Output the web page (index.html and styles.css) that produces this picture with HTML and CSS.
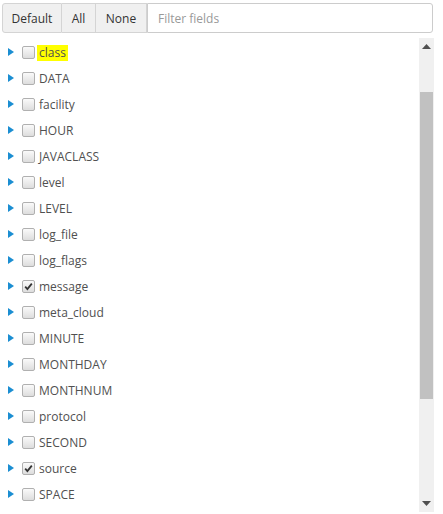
FILE: index.html
```html
<!DOCTYPE html>
<html>
<head>
<meta charset="utf-8">
<link rel="stylesheet" href="styles.css">
</head>
<body>
<div class="panel">
  <div class="toolbar">
    <button class="btn btn-first">Default</button>
    <button class="btn">All</button>
    <button class="btn">None</button>
    <input class="filter" type="text" placeholder="Filter fields">
  </div>
  <div class="body">
    <ul class="fields">
      <li class="field"><span class="caret"></span><span class="cb"></span><span class="name hl">class</span></li>
      <li class="field"><span class="caret"></span><span class="cb"></span><span class="name">DATA</span></li>
      <li class="field"><span class="caret"></span><span class="cb"></span><span class="name">facility</span></li>
      <li class="field"><span class="caret"></span><span class="cb"></span><span class="name">HOUR</span></li>
      <li class="field"><span class="caret"></span><span class="cb"></span><span class="name">JAVACLASS</span></li>
      <li class="field"><span class="caret"></span><span class="cb"></span><span class="name">level</span></li>
      <li class="field"><span class="caret"></span><span class="cb"></span><span class="name">LEVEL</span></li>
      <li class="field"><span class="caret"></span><span class="cb"></span><span class="name">log_file</span></li>
      <li class="field"><span class="caret"></span><span class="cb"></span><span class="name">log_flags</span></li>
      <li class="field"><span class="caret"></span><span class="cb checked"><svg viewBox="0 0 13 13" width="13" height="13"><path d="M3.2 6.6 L5.4 9 L9.8 3.6" fill="none" stroke="#333" stroke-width="1.8"/></svg></span><span class="name">message</span></li>
      <li class="field"><span class="caret"></span><span class="cb"></span><span class="name">meta_cloud</span></li>
      <li class="field"><span class="caret"></span><span class="cb"></span><span class="name">MINUTE</span></li>
      <li class="field"><span class="caret"></span><span class="cb"></span><span class="name">MONTHDAY</span></li>
      <li class="field"><span class="caret"></span><span class="cb"></span><span class="name">MONTHNUM</span></li>
      <li class="field"><span class="caret"></span><span class="cb"></span><span class="name">protocol</span></li>
      <li class="field"><span class="caret"></span><span class="cb"></span><span class="name">SECOND</span></li>
      <li class="field"><span class="caret"></span><span class="cb checked"><svg viewBox="0 0 13 13" width="13" height="13"><path d="M3.2 6.6 L5.4 9 L9.8 3.6" fill="none" stroke="#333" stroke-width="1.8"/></svg></span><span class="name">source</span></li>
      <li class="field"><span class="caret"></span><span class="cb"></span><span class="name">SPACE</span></li>
    </ul>
    <div class="scrollbar">
      <div class="sb-arrow"><svg width="9" height="5" viewBox="0 0 9 5"><path d="M0 5 L4.5 0 L9 5 Z" fill="#505050"/></svg></div>
      <div class="sb-gap-top"></div>
      <div class="sb-thumb"></div>
      <div class="sb-gap-bottom"></div>
      <div class="sb-arrow"><svg width="9" height="5" viewBox="0 0 9 5"><path d="M0 0 L9 0 L4.5 5 Z" fill="#505050"/></svg></div>
    </div>
  </div>
</div>
</body>
</html>
```
FILE: styles.css
```css
html, body {
  margin: 0;
  padding: 0;
  background: #ffffff;
}
body {
  font-family: "Open Sans", "DejaVu Sans", sans-serif;
  font-size: 12px;
  width: 443px;
  height: 514px;
  overflow: hidden;
}
.panel {
  display: flex;
  flex-direction: column;
  padding: 3px 10px 0 2px;
}
.toolbar {
  display: flex;
  height: 30px;
}
.btn {
  font-family: "Open Sans", sans-serif;
  font-size: 12px;
  color: #333;
  background: #f0f0f0;
  border: 1px solid #d4d4d4;
  border-left: none;
  padding: 0;
  margin: 0;
  height: 30px;
  width: 34px;
}
.btn-first {
  width: 60px;
  border-left: 1px solid #d4d4d4;
  border-radius: 3px 0 0 3px;
}
.btn:nth-child(3) {
  width: 51px;
}
.filter {
  flex: 1;
  box-sizing: border-box;
  height: 30px;
  margin: 0;
  border: 1px solid #cccccc;
  border-radius: 0 3px 3px 0;
  padding: 0 10px;
  font-family: "Open Sans", sans-serif;
  font-size: 12px;
  color: #555;
  outline: none;
}
.filter::placeholder {
  color: #999;
}
.body {
  display: flex;
  margin-top: 5px;
  height: 474px;
}
.fields {
  list-style: none;
  margin: 0;
  padding: 2px 0 0 0;
  flex: 1;
  overflow: hidden;
}
.field {
  display: flex;
  align-items: center;
  height: 26px;
  color: #505050;
}
.caret {
  width: 0;
  height: 0;
  border-top: 4.5px solid transparent;
  border-bottom: 4.5px solid transparent;
  border-left: 6px solid #1b8ed2;
  margin-left: 6px;
  margin-top: -3px;
}
.cb {
  box-sizing: border-box;
  width: 13px;
  height: 13px;
  margin-left: 8px;
  margin-top: -2px;
  border: 1px solid #b0b0b0;
  border-radius: 2px;
  background: linear-gradient(#fafafa, #dddddd);
  display: flex;
  align-items: center;
  justify-content: center;
}
.cb svg {
  display: block;
  margin: -1px;
}
.name {
  margin-left: 4px;
  line-height: 16px;
}
.hl {
  background: #ffff00;
  padding: 0 2px;
  margin-left: 2px;
}
.scrollbar {
  width: 15px;
  background: #f0f0f0;
  display: flex;
  flex-direction: column;
  align-items: center;
  margin-right: -1px;
}
.sb-arrow {
  height: 17px;
  display: flex;
  align-items: center;
  justify-content: center;
  width: 100%;
}
.sb-gap-top {
  height: 37px;
}
.sb-thumb {
  width: 13px;
  height: 307px;
  background: #c1c1c1;
}
.sb-gap-bottom {
  flex: 1;
}
```
